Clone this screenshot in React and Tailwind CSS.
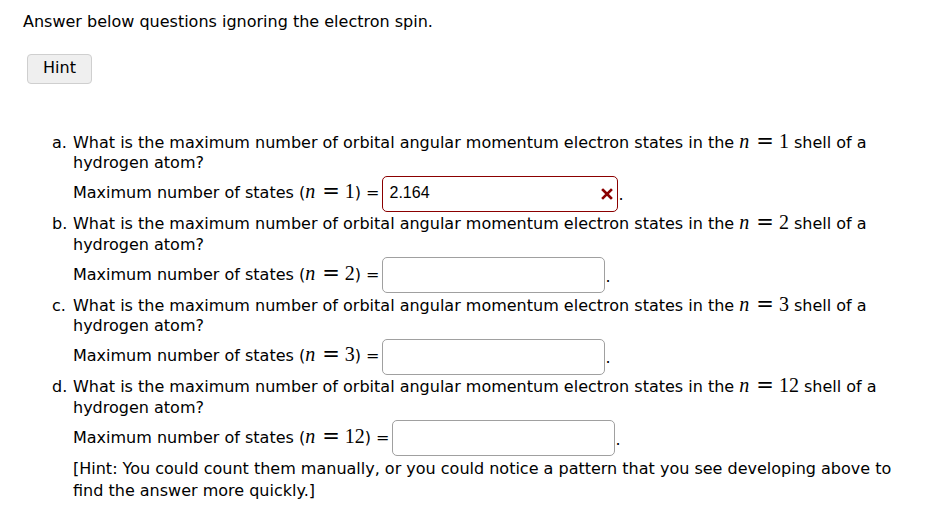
import React from 'react';

const questions = [
  { label: 'a.', n: '1', value: '2.164', wrong: true },
  { label: 'b.', n: '2', value: '' },
  { label: 'c.', n: '3', value: '' },
  { label: 'd.', n: '12', value: '' },
];

const Math = ({ children }) => (
  <span className="font-['Liberation_Serif'] text-[20px] leading-[0]">{children}</span>
);

const NEq = ({ n }) => (
  <Math>
    <i className="pr-[2px]">n</i>
    <span className="mx-[5px] font-['DejaVu_Sans'] text-[21px]">=</span>
    {n}
  </Math>
);

const WrongMark = () => (
  <svg viewBox="0 0 12 12" className="w-[12px] h-[12px]" aria-hidden="true">
    <path d="M2 2l8 8M10 2l-8 8" stroke="#8b0000" strokeWidth="2.6" strokeLinecap="square" />
  </svg>
);

const Question = ({ q, last }) => (
  <li className="flex">
    <span className="w-[21px] shrink-0">{q.label}</span>
    <div className="flex flex-col">
      <span className="whitespace-nowrap">
        What is the maximum number of orbital angular momentum electron states in the <NEq n={q.n} /> shell of a
      </span>
      <span className="whitespace-nowrap">hydrogen atom?</span>
      <div className="flex items-center mt-[2px] mb-[2.5px] whitespace-nowrap">
        <span>
          Maximum number of states (<NEq n={q.n} />) =
        </span>
        <div
          className={
            q.wrong
              ? 'ml-[2px] h-[36px] w-[236px] flex items-center justify-between pl-[7px] pr-[4px] rounded-[5px] border border-[#8b0000] bg-white'
              : 'ml-[2px] h-[36px] w-[223px] rounded-[5px] border border-[#a0a0a0] bg-white'
          }
        >
          {q.wrong && (
            <>
              <span className="font-['Liberation_Sans'] text-[16px] text-black">{q.value}</span>
              <WrongMark />
            </>
          )}
        </div>
        <span className="ml-[1px] self-end mb-[6px]">.</span>
      </div>
      {last && (
        <p className="mt-[-1px] leading-[22px]">
          <span className="block whitespace-nowrap">
            [Hint: You could count them manually, or you could notice a pattern that you see developing above to
          </span>
          <span className="block whitespace-nowrap">find the answer more quickly.]</span>
        </p>
      )}
    </div>
  </li>
);

export default function App() {
  return (
    <div className="min-h-screen bg-white text-black font-['DejaVu_Sans',sans-serif] text-[16px] leading-[20.5px] pl-[23px] pt-[12px]">
      <p>Answer below questions ignoring the electron spin.</p>
      <button className="block mt-[21px] ml-[4px] h-[30px] w-[65px] rounded-[4px] border border-[#cfcfcf] bg-[#efefef] text-[16px]">
        Hint
      </button>
      <ol className="mt-[49px] pl-[29px] flex flex-col">
        {questions.map((q, i) => (
          <Question key={q.label} q={q} last={i === questions.length - 1} />
        ))}
      </ol>
    </div>
  );
}
